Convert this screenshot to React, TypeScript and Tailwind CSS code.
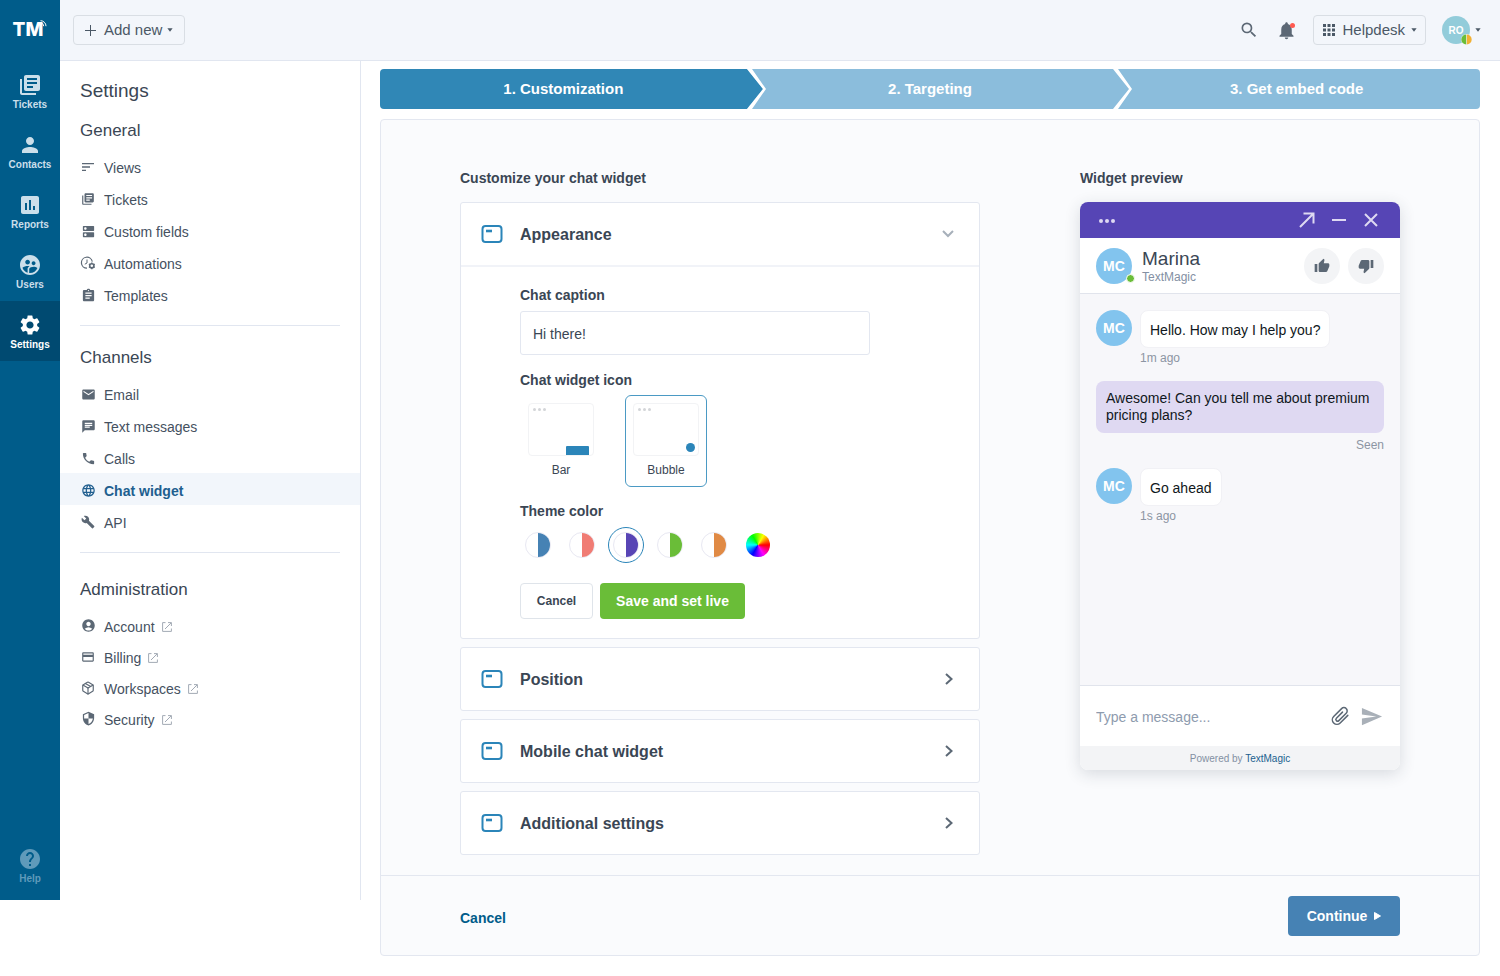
import { useState, type ReactNode } from "react";
import type { IconType } from "react-icons";
import {
  MdAccountCircle,
  MdApps,
  MdAssessment,
  MdAssignment,
  MdBuild,
  MdChat,
  MdDns,
  MdEmail,
  MdHelp,
  MdLanguage,
  MdLibraryBooks,
  MdNotifications,
  MdPayment,
  MdPerson,
  MdPhone,
  MdSearch,
  MdSecurity,
  MdSend,
  MdSettings,
  MdSort,
  MdSupervisedUserCircle,
  MdThumbDown,
  MdThumbUp,
} from "react-icons/md";
import { FiPackage } from "react-icons/fi";

const mainNav: { label: string; icon: IconType; active?: boolean }[] = [
  { label: "Tickets", icon: MdLibraryBooks },
  { label: "Contacts", icon: MdPerson },
  { label: "Reports", icon: MdAssessment },
  { label: "Users", icon: MdSupervisedUserCircle },
  { label: "Settings", icon: MdSettings, active: true },
];

type SettingsItem = { label: string; icon: ReactNode; active?: boolean; external?: boolean };

const generalItems: SettingsItem[] = [
  { label: "Views", icon: <MdSort size={16} /> },
  { label: "Tickets", icon: <MdLibraryBooks size={14} /> },
  { label: "Custom fields", icon: <MdDns size={15} /> },
  { label: "Automations", icon: <AutomationIcon /> },
  { label: "Templates", icon: <MdAssignment size={15} /> },
];

const channelItems: SettingsItem[] = [
  { label: "Email", icon: <MdEmail size={15} /> },
  { label: "Text messages", icon: <MdChat size={15} /> },
  { label: "Calls", icon: <MdPhone size={15} /> },
  { label: "Chat widget", icon: <MdLanguage size={15} />, active: true },
  { label: "API", icon: <MdBuild size={14} /> },
];

const adminItems: SettingsItem[] = [
  { label: "Account", icon: <MdAccountCircle size={15} />, external: true },
  { label: "Billing", icon: <MdPayment size={14} />, external: true },
  { label: "Workspaces", icon: <FiPackage size={14} />, external: true },
  { label: "Security", icon: <MdSecurity size={15} />, external: true },
];

const themes = [
  { name: "Blue", fill: "bg-[#4682b4]" },
  { name: "Coral", fill: "bg-[#f07c74]" },
  { name: "Purple", fill: "bg-[#5845b5]" },
  { name: "Green", fill: "bg-[#6abd38]" },
  { name: "Orange", fill: "bg-[#e08a45]" },
];

function AutomationIcon() {
  return (
    <svg width="16" height="14" viewBox="0 0 16 14" fill="none" stroke="currentColor">
      <path d="M7 12.2A5.5 5.5 0 1 1 12.3 5.6" strokeWidth="1.2" />
      <path d="M7 3.5V7L4.8 8.2" strokeWidth="1" />
      <circle cx="11.8" cy="9.8" r="2.1" strokeWidth="1.6" />
      <path
        d="M11.8 6.4v1.2M11.8 12v1.2M8.9 8.1l1 .6M13.7 10.9l1 .6M8.9 11.5l1-.6M13.7 8.7l1-.6"
        strokeWidth="1.4"
      />
    </svg>
  );
}

function ExternalIcon() {
  return (
    <svg width="10" height="10" viewBox="0 0 10 10" fill="none" stroke="#a3aab5">
      <path d="M3.5.6H.6v8.8h8.8V6.5" />
      <path d="M3 7 9.2.8M6 .6h3.4V4" />
    </svg>
  );
}

function Caret() {
  return (
    <svg width="6" height="4" viewBox="0 0 6 4" fill="#4b5866">
      <path d="M.4.2h5.2L3 3.7z" />
    </svg>
  );
}

function PanelIcon() {
  return (
    <svg width="22" height="18" viewBox="0 0 22 18" fill="none" stroke="#2b85b9" strokeWidth="2">
      <rect x="1.5" y="1" width="19" height="16" rx="3" />
      <path d="M5 6h6" strokeWidth="2.6" />
    </svg>
  );
}

function Avatar({ online }: { online?: boolean }) {
  return (
    <div className="relative flex size-9 shrink-0 items-center justify-center rounded-full bg-[#82c4ee] text-sm font-bold text-white">
      MC
      {online && (
        <span className="absolute -right-[3px] bottom-px size-[9px] rounded-full border border-white bg-[#6abd38]" />
      )}
    </div>
  );
}

function SettingsSection({
  title,
  items,
  rowClass = "h-8",
}: {
  title: string;
  items: SettingsItem[];
  rowClass?: string;
}) {
  return (
    <section>
      <h2 className="px-5 text-[17px] leading-5">{title}</h2>
      <ul className="mt-[9px]">
        {items.map((item) => (
          <li key={item.label}>
            <a
              href="#"
              className={`flex items-center px-5 pt-1 text-sm ${rowClass} ${
                item.active ? "bg-[#f2f6fb] font-bold text-[#215f8f]" : "text-[#45515f]"
              }`}
            >
              <span className={`mr-2 flex w-4 justify-center pb-0.5 ${item.active ? "" : "text-[#5c6875]"}`}>
                {item.icon}
              </span>
              <span className="mr-[7px]">{item.label}</span>
              {item.external && <ExternalIcon />}
            </a>
          </li>
        ))}
      </ul>
    </section>
  );
}

function Step({ label, active, tail }: { label: string; active?: boolean; tail?: string }) {
  return (
    <li
      className={`relative flex h-10 flex-1 items-center justify-center pt-px text-[15px] font-bold text-white ${
        active ? "bg-[#3087b6]" : "bg-[#8bbddc]"
      }`}
    >
      {/* Arrow tip of the previous step */}
      {tail && (
        <svg className="absolute top-0 left-0" width="20" height="40" viewBox="0 0 20 40">
          <path d="M0 0 16 20 0 40z" fill={tail} />
          <path d="M0 0H5L19 20 5 40H0L16 20z" fill="#fff" />
        </svg>
      )}
      <a href="#">{label}</a>
    </li>
  );
}

function CollapsedPanel({ title }: { title: string }) {
  return (
    <button
      type="button"
      className="flex h-16 w-full items-center rounded-[3px] border border-[#e3e7f0] bg-white pr-[26px] pl-5 text-base font-bold"
    >
      <PanelIcon />
      <span className="ml-[17px] flex-1 pt-0.5 text-left">{title}</span>
      <svg width="8" height="12" viewBox="0 0 8 12" fill="none" stroke="#5c6875" strokeWidth="2">
        <path d="m1 1 5.5 5L1 11" />
      </svg>
    </button>
  );
}

function IconOption({
  name,
  checked,
  onSelect,
  children,
}: {
  name: string;
  checked: boolean;
  onSelect: () => void;
  children: ReactNode;
}) {
  return (
    <label
      className={`relative flex h-[92px] w-[82px] cursor-pointer flex-col items-center rounded-md border pt-[7px] text-xs ${
        checked ? "border-[#4b9ac4]" : "border-transparent"
      }`}
    >
      <input type="radio" name="widget-icon" className="sr-only" checked={checked} onChange={onSelect} />
      <span className="relative h-[53px] w-[66px] rounded-[4px] border border-[#f2f3f5]">
        <span className="absolute top-1 left-1 flex gap-0.5">
          <span className="size-[3px] rounded-full bg-[#d3d5d8]" />
          <span className="size-[3px] rounded-full bg-[#d3d5d8]" />
          <span className="size-[3px] rounded-full bg-[#d3d5d8]" />
        </span>
        {children}
      </span>
      <span className="mt-1.5 leading-4">{name}</span>
    </label>
  );
}

function AppearancePanel() {
  const [icon, setIcon] = useState("Bubble");
  const [theme, setTheme] = useState("Purple");

  return (
    <div className="rounded-[3px] border border-[#e3e7f0] bg-white">
      <button
        type="button"
        className="flex h-16 w-full items-center border-b-2 border-[#f1f3f8] pr-[25px] pl-5 text-base font-bold"
      >
        <PanelIcon />
        <span className="ml-[17px] flex-1 pt-0.5 text-left">Appearance</span>
        <svg width="12" height="8" viewBox="0 0 12 8" fill="none" stroke="#a7b0ba" strokeWidth="2">
          <path d="m1 1 5 5 5-5" />
        </svg>
      </button>

      <div className="px-[59px] pt-[18px] pb-[19px]">
        <label htmlFor="caption" className="block text-sm font-bold">
          Chat caption
        </label>
        <input
          id="caption"
          type="text"
          defaultValue="Hi there!"
          className="mt-1.5 block h-11 w-full max-w-[350px] rounded-[3px] border border-[#e3e7f0] px-3 pt-0.5 text-sm outline-none"
        />

        <fieldset className="mt-[15px]">
          <legend className="text-sm font-bold">Chat widget icon</legend>
          <div className="mt-[5px] flex gap-[23px]">
            <IconOption name="Bar" checked={icon === "Bar"} onSelect={() => setIcon("Bar")}>
              <span className="absolute right-1 bottom-0 h-[9px] w-[23px] rounded-t-[1px] bg-[#2b85b9]" />
            </IconOption>
            <IconOption name="Bubble" checked={icon === "Bubble"} onSelect={() => setIcon("Bubble")}>
              <span className="absolute right-[3px] bottom-[3px] size-[9px] rounded-full bg-[#2b85b9]" />
            </IconOption>
          </div>
        </fieldset>

        <fieldset className="mt-3.5">
          <legend className="text-sm font-bold">Theme color</legend>
          <div className="mt-1.5 flex gap-2">
            {themes.map((t) => (
              <label
                key={t.name}
                className={`relative flex size-9 cursor-pointer items-center justify-center rounded-full border ${
                  theme === t.name ? "border-[#2b85b9]" : "border-transparent"
                }`}
              >
                <input
                  type="radio"
                  name="theme"
                  aria-label={t.name}
                  className="sr-only"
                  checked={theme === t.name}
                  onChange={() => setTheme(t.name)}
                />
                <span className="flex size-[26px] justify-end overflow-hidden rounded-full border border-[#e8e8f2] bg-white">
                  <span className={`w-1/2 ${t.fill}`} />
                </span>
              </label>
            ))}
            <label className="relative flex size-9 cursor-pointer items-center justify-center">
              <input
                type="radio"
                name="theme"
                aria-label="Custom color"
                className="sr-only"
                checked={theme === "Custom"}
                onChange={() => setTheme("Custom")}
              />
              <span className="size-6 rounded-full bg-[conic-gradient(from_90deg,#f00,#f0f,#00f,#0ff,#0f0,#ff0,#f00)]" />
            </label>
          </div>
        </fieldset>

        <div className="mt-5 flex gap-[7px]">
          <button
            type="button"
            className="h-9 w-[73px] rounded-[4px] border border-[#dfe4ea] bg-white text-xs font-bold"
          >
            Cancel
          </button>
          <button type="button" className="h-9 w-[145px] rounded-[4px] bg-[#6abd38] text-sm font-bold text-white">
            Save and set live
          </button>
        </div>
      </div>
    </div>
  );
}

function ChatPreview() {
  return (
    <div className="overflow-hidden rounded-lg bg-white shadow-[0_4px_16px_rgba(40,50,70,0.16)]">
      <div className="flex h-9 items-center bg-[#5645b5] pr-[21px] pl-[19px]">
        <button type="button" aria-label="Menu" className="mr-auto flex gap-0.5 pt-0.5">
          <span className="size-1 rounded-full bg-[#ded9f2]" />
          <span className="size-1 rounded-full bg-[#ded9f2]" />
          <span className="size-1 rounded-full bg-[#ded9f2]" />
        </button>
        <div className="flex items-center gap-4">
          <button type="button" aria-label="Open in new window">
            <svg width="16" height="16" viewBox="0 0 16 16" fill="none" stroke="#ded9f2" strokeWidth="2">
              <path d="M1 15 14.5 1.5M4.5 1.5h10v10" />
            </svg>
          </button>
          <button type="button" aria-label="Minimize">
            <svg width="16" height="16" viewBox="0 0 16 16" stroke="#ded9f2" strokeWidth="2">
              <path d="M1 8h14" />
            </svg>
          </button>
          <button type="button" aria-label="Close">
            <svg width="16" height="16" viewBox="0 0 16 16" stroke="#ded9f2" strokeWidth="2">
              <path d="m2 2 12 12M14 2 2 14" />
            </svg>
          </button>
        </div>
      </div>

      <div className="flex h-14 items-center border-b border-[#e1e4ec] px-4">
        <Avatar online />
        <div className="ml-2.5 flex-1 pt-[3px]">
          <p className="text-[19px] leading-5">Marina</p>
          <p className="text-xs text-[#8390a3]">TextMagic</p>
        </div>
        <div className="flex gap-2 text-[#5c6875]">
          <button
            type="button"
            aria-label="Like"
            className="flex size-9 items-center justify-center rounded-full bg-[#f3f4f6]"
          >
            <MdThumbUp size={16} />
          </button>
          <button
            type="button"
            aria-label="Dislike"
            className="flex size-9 items-center justify-center rounded-full bg-[#f3f4f6]"
          >
            <MdThumbDown size={16} />
          </button>
        </div>
      </div>

      <div className="flex min-h-[391px] flex-col gap-[15px] bg-[#f7f7fa] p-4 text-[#0f1720]">
        <div className="flex items-start gap-2">
          <Avatar />
          <div>
            <p className="rounded-lg border border-[#f1f1f5] bg-white px-[9px] pt-[9px] pb-[7px] text-sm">
              Hello. How may I help you?
            </p>
            <p className="mt-0.5 text-xs text-[#8c95a3]">1m ago</p>
          </div>
        </div>
        <div>
          <p className="rounded-lg bg-[#dfd9f2] px-2.5 py-[9px] text-sm leading-[17px]">
            Awesome! Can you tell me about premium pricing plans?
          </p>
          <p className="mt-1 text-right text-xs text-[#8c95a3]">Seen</p>
        </div>
        <div className="flex items-start gap-2">
          <Avatar />
          <div>
            <p className="rounded-lg border border-[#f1f1f5] bg-white px-[9px] pt-[9px] pb-[7px] text-sm">
              Go ahead
            </p>
            <p className="mt-0.5 text-xs text-[#8c95a3]">1s ago</p>
          </div>
        </div>
      </div>

      <div className="flex h-[61px] items-center border-t border-[#e1e4ec] pr-[17px] pl-4">
        <input
          type="text"
          aria-label="Message"
          placeholder="Type a message..."
          className="min-w-0 flex-1 pt-0.5 text-sm outline-none placeholder:text-[#8e9bae]"
        />
        <button type="button" aria-label="Attach file">
          <svg width="20" height="20" viewBox="0 0 20 20" fill="none" stroke="#5c6875" strokeWidth="1.5">
            <path
              d="M17.8 9.4 10.2 17a4.6 4.6 0 0 1-6.5 0 4.6 4.6 0 0 1 0-6.5l7.9-7.9a3.2 3.2 0 0 1 4.6 0 3.2 3.2 0 0 1 0 4.6l-7.4 7.4a1.7 1.7 0 0 1-2.4 0 1.7 1.7 0 0 1 0-2.4l6.1-6.1"
              strokeLinecap="round"
            />
          </svg>
        </button>
        <button type="button" aria-label="Send" className="ml-2.5 text-[#a9b0b8]">
          <MdSend size={23} />
        </button>
      </div>
      <p className="h-6 bg-[#f3f4f6] text-center text-[10px] leading-[25px] text-[#8390a3]">
        Powered by{" "}
        <a href="#" className="text-[#215f8f]">
          TextMagic
        </a>
      </p>
    </div>
  );
}

export default function App() {
  return (
    <div className="flex min-h-screen items-start bg-white font-['Liberation_Sans',Arial,sans-serif] text-[#3a4654]">
      <aside className="flex min-h-[900px] w-15 shrink-0 flex-col bg-[#005c8a]">
        <a
          href="#"
          className="relative flex h-[61px] items-center justify-center pr-1 pb-px font-['Inter',sans-serif] text-[19px] font-extrabold text-white"
        >
          TM
          <svg className="absolute top-5 left-10" width="7" height="7" viewBox="0 0 7 7" fill="none" stroke="#fff">
            <path d="M.5.7a5.5 5.5 0 0 1 5.5 5.5M.5 3a3.2 3.2 0 0 1 3.2 3.2" />
          </svg>
        </a>
        <nav>
          {mainNav.map(({ label, icon: Icon, active }) => (
            <a
              key={label}
              href="#"
              className={`flex h-15 flex-col items-center pt-3 text-[10px] leading-[15px] font-bold ${
                active ? "bg-[#004a71] text-white" : "text-[#cbdfea]"
              }`}
            >
              <Icon size={24} />
              {label}
            </a>
          ))}
        </nav>
        <a
          href="#"
          className="mt-auto mb-[5px] flex h-15 flex-col items-center pt-3 text-[10px] leading-[15px] font-bold text-[#5f9aba]"
        >
          <MdHelp size={24} />
          Help
        </a>
      </aside>

      <div className="min-w-0 flex-1">
        <header className="flex h-[61px] items-center justify-between border-b border-[#e1e6f0] bg-[#f3f6fb] pr-[19px] pl-[13px]">
          <button
            type="button"
            className="flex h-[30px] items-center rounded-[4px] border border-[#d9dee4] px-[11px] text-[15px] text-[#4b5866]"
          >
            <svg className="mr-2" width="11" height="11" viewBox="0 0 11 11" stroke="#4b5866">
              <path d="M0 5.5h11M5.5 0v11" />
            </svg>
            Add new
            <span className="ml-[5px] flex">
              <Caret />
            </span>
          </button>
          <div className="flex items-center gap-4 text-[#5c6875]">
            <button type="button" aria-label="Search" className="px-px">
              <MdSearch size={20} />
            </button>
            <button type="button" aria-label="Notifications" className="relative">
              <MdNotifications size={21} />
              <span className="absolute top-[3px] right-0.5 size-[5px] rounded-full bg-[#ff5a50]" />
            </button>
            <button
              type="button"
              className="flex h-[30px] items-center rounded-[4px] border border-[#d9dee4] pr-2 pl-1.5 text-[15px] text-[#4b5866]"
            >
              <MdApps size={18} className="mr-1" />
              Helpdesk
              <span className="ml-1.5 flex">
                <Caret />
              </span>
            </button>
            <button type="button" aria-label="Account menu" className="flex items-center gap-[5px]">
              <span className="relative flex size-7 items-center justify-center rounded-full bg-[#92ccda] text-[10px] font-bold text-white">
                RO
                <svg className="absolute -right-0.5 -bottom-px" width="11" height="11" viewBox="0 0 11 11">
                  <circle cx="5.5" cy="5.5" r="5.5" fill="#f3f6fb" />
                  <path d="M5.2.6v9.8a4.9 4.9 0 0 1 0-9.8z" fill="#6abd38" />
                  <path d="M5.8.6v9.8a4.9 4.9 0 0 0 0-9.8z" fill="#f2b134" />
                </svg>
              </span>
              <Caret />
            </button>
          </div>
        </header>

        <div className="flex items-start">
          <nav className="min-h-[839px] w-[301px] shrink-0 border-r border-[#e1e6f0] pt-5">
            <h1 className="mb-5 px-5 text-[19px] leading-5">Settings</h1>
            <SettingsSection title="General" items={generalItems} />
            <hr className="mx-5 mt-[15px] mb-[22px] border-[#e1e6f0]" />
            <SettingsSection title="Channels" items={channelItems} />
            <hr className="mx-5 mt-[15px] mb-[27px] border-[#e1e6f0]" />
            <SettingsSection title="Administration" items={adminItems} rowClass="h-[31px]" />
          </nav>

          <main className="min-w-0 flex-1 pt-2 pr-5 pb-5 pl-[19px]">
            <ol className="flex overflow-hidden rounded-[4px]">
              <Step label="1. Customization" active />
              <Step label="2. Targeting" tail="#3087b6" />
              <Step label="3. Get embed code" tail="#8bbddc" />
            </ol>

            <div className="mt-2.5 rounded-[4px] border border-[#e3e7f0] bg-[#fafbfd]">
              <div className="flex gap-[100px] px-[79px] pt-12 pb-5">
                <section className="min-w-0 flex-1">
                  <h2 className="mb-3.5 text-sm font-bold">Customize your chat widget</h2>
                  <div className="flex flex-col gap-2">
                    <AppearancePanel />
                    <CollapsedPanel title="Position" />
                    <CollapsedPanel title="Mobile chat widget" />
                    <CollapsedPanel title="Additional settings" />
                  </div>
                </section>
                <section className="w-80 shrink-0">
                  <h2 className="mb-3.5 text-sm font-bold">Widget preview</h2>
                  <ChatPreview />
                </section>
              </div>
              <div className="flex items-center justify-between border-t border-[#e3e7f0] px-[79px] pt-5 pb-[19px] text-sm font-bold">
                <button type="button" className="pt-1 text-[#005c8a]">
                  Cancel
                </button>
                <button
                  type="button"
                  className="flex h-10 w-28 items-center justify-center gap-[7px] rounded-[4px] bg-[#4682b4] text-white"
                >
                  Continue
                  <svg width="7" height="8" viewBox="0 0 7 8" fill="#fff">
                    <path d="M.5.5v7L6.5 4z" stroke="#fff" strokeLinejoin="round" />
                  </svg>
                </button>
              </div>
            </div>
          </main>
        </div>
      </div>
    </div>
  );
}
